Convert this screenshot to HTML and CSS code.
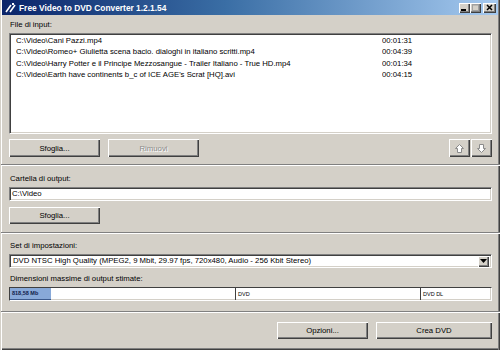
FILE: index.html
```html
<!DOCTYPE html>
<html>
<head>
<meta charset="utf-8">
<link rel="stylesheet" href="styles.css">
</head>
<body>
<div class="window">
  <div class="titlebar">
    <svg class="appicon" width="11" height="11" viewBox="0 0 11 11">
      <path d="M1 10 L6 3" stroke="#fff" stroke-width="1.6"/>
      <path d="M5 10 L10 3" stroke="#fff" stroke-width="1.6"/>
      <rect x="7" y="1" width="2" height="2" fill="#fff"/>
    </svg>
    <span class="title">Free Video to DVD Converter 1.2.1.54</span>
    <div class="tbtns">
      <span class="tbtn"><svg width="11" height="10" viewBox="0 0 11 10"><rect x="2" y="6" width="5" height="2" fill="#000"/></svg></span>
      <span class="tbtn"><svg width="11" height="10" viewBox="0 0 11 10"><rect x="2.5" y="1.5" width="6" height="6" fill="none" stroke="#a0a0a0"/><rect x="2" y="1" width="7" height="1.5" fill="#a0a0a0"/></svg></span>
      <span class="tbtn close"><svg width="11" height="10" viewBox="0 0 11 10"><path d="M3 2 L8 7 M8 2 L3 7" stroke="#000" stroke-width="1.5"/></svg></span>
    </div>
  </div>
  <div class="content">
    <div class="label l1">File di input:</div>
    <div class="list">
      <div class="row"><span>C:\Video\Cani Pazzi.mp4</span><span>00:01:31</span></div>
      <div class="row"><span>C:\Video\Romeo+ Giulietta scena bacio. dialoghi in italiano scritti.mp4</span><span>00:04:39</span></div>
      <div class="row"><span>C:\Video\Harry Potter e il Principe Mezzosangue - Trailer Italiano - True HD.mp4</span><span>00:01:34</span></div>
      <div class="row"><span>C:\Video\Earth have continents b_c of ICE AGE's Scrat [HQ].avi</span><span>00:04:15</span></div>
    </div>
    <div class="btnrow r1">
      <button class="btn">Sfoglia...</button>
      <button class="btn disabled">Rimuovi</button>
      <div class="spacer"></div>
      <button class="btn sq"><svg width="9" height="9" viewBox="0 0 9 9"><path d="M4.5 0.5 L8.5 4.5 L6.5 4.5 L6.5 8.5 L2.5 8.5 L2.5 4.5 L0.5 4.5 Z" fill="#fff" stroke="#8a8a8a"/></svg></button>
      <button class="btn sq"><svg width="9" height="9" viewBox="0 0 9 9"><path d="M4.5 8.5 L8.5 4.5 L6.5 4.5 L6.5 0.5 L2.5 0.5 L2.5 4.5 L0.5 4.5 Z" fill="#fff" stroke="#8a8a8a"/></svg></button>
    </div>
    <div class="sep s1"></div>
    <div class="label l2">Cartella di output:</div>
    <div class="field">C:\Video</div>
    <div class="btnrow r2">
      <button class="btn">Sfoglia...</button>
    </div>
    <div class="sep s2"></div>
    <div class="label l3">Set di impostazioni:</div>
    <div class="select">
      <span class="seltext">DVD NTSC High Quality (MPEG2, 9 Mbit, 29.97 fps, 720x480, Audio - 256 Kbit Stereo)</span>
      <span class="dd"><svg width="7" height="4" viewBox="0 0 7 4"><path d="M0 0 L7 0 L3.5 4 Z" fill="#000"/></svg></span>
    </div>
    <div class="label l4">Dimensioni massime di output stimate:</div>
    <div class="bar">
      <div class="fill"><span>818,58 Mb</span></div>
      <div class="mark m1">DVD</div>
      <div class="mark m2">DVD DL</div>
    </div>
    <div class="sep s3"></div>
    <div class="btnrow r3">
      <div class="spacer"></div>
      <button class="btn opt">Opzioni...</button>
      <button class="btn crea">Crea DVD</button>
    </div>
  </div>
</div>
</body>
</html>
```
FILE: styles.css
```css
* { box-sizing: border-box; }
html, body { margin: 0; padding: 0; background: #d4d0c8; }
body { font-family: "Liberation Sans", Arial, sans-serif; font-size: 7.75px; color: #000; }

.window {
  width: 500px;
  height: 350px;
  background: #d4d0c8;
  border-left: 1px solid #d4d0c8;
  box-shadow: inset 1px 0 #fff, inset -1px 0 #404040, inset -2px 0 #808080, inset 0 -1px #404040, inset 0 -2px #808080;
  display: flex;
  flex-direction: column;
  overflow: hidden;
}

.titlebar {
  height: 15px;
  margin: 0 2px 0 1px;
  background: linear-gradient(to right, #0a246a 0%, #3a6ea5 45%, #a6caf0 100%);
  display: flex;
  align-items: center;
  color: #fff;
}
.appicon { margin-left: 3px; margin-right: 3px; }
.title { font-weight: bold; font-size: 8.4px; }
.tbtns { margin-left: auto; display: flex; margin-right: 2px; }
.tbtn {
  width: 11px; height: 10px;
  background: #d4d0c8;
  box-shadow: inset 1px 1px #fff, inset -1px -1px #404040, inset -2px -2px #808080;
  display: flex;
}
.tbtn.close { margin-left: 2px; width: 13px; }
.tbtn.close svg { margin-left: 1px; }

.content {
  padding: 0 8px;
  display: flex;
  flex-direction: column;
}

.label { height: 10px; line-height: 10px; padding-left: 1px; }
.l1 { margin-top: 5px; }
.l2 { margin-top: 8px; }
.l3 { margin-top: 7px; }
.l4 { margin-top: 6px; }

.list {
  margin-top: 3px;
  height: 101px;
  background: #fff;
  border: 1px solid;
  border-color: #808080 #fff #fff #808080;
  box-shadow: inset 1px 1px #404040, inset -1px -1px #d4d0c8;
  padding: 1px 0 0 6px;
}
.row {
  display: grid;
  grid-template-columns: 366px 1fr;
  height: 11.33px;
  line-height: 11.33px;
  white-space: nowrap;
}
.row span { overflow: hidden; }

.btnrow { display: flex; align-items: stretch; }
.r1 { margin-top: 5px; height: 18px; }
.r2 { margin-top: 6px; height: 17px; }
.r3 { margin-top: 9px; height: 17px; }
.spacer { flex: 1; }

.btn {
  font: inherit;
  color: #000;
  background: #d4d0c8;
  border: 0;
  padding: 0;
  margin: 0;
  width: 91px;
  box-shadow: inset 1px 1px #fff, inset -1px -1px #404040, inset -2px -2px #808080;
  display: flex;
  align-items: center;
  justify-content: center;
}
.btn + .btn { margin-left: 8px; }
.btn.disabled { color: #8c8c8c; text-shadow: 1px 1px #fff; }
.btn.sq { width: 21px; margin-left: 1px; }
.btn.sq:first-of-type { margin-left: 0; }
.btn.opt { width: 91px; }
.btn.crea { width: 116px; }

.sep {
  height: 2px;
  margin: 0 -8px;
  border-top: 1px solid #808080;
  border-bottom: 1px solid #fff;
}
.s1 { margin-top: 7px; }
.s2 { margin-top: 8px; }
.s3 { margin-top: 10px; }

.field {
  margin-top: 3px;
  height: 14px;
  background: #fff;
  border: 1px solid;
  border-color: #808080 #fff #fff #808080;
  box-shadow: inset 1px 1px #404040, inset -1px -1px #d4d0c8;
  padding-left: 2px;
  line-height: 12px;
}

.select {
  margin-top: 3px;
  height: 14px;
  background: #fff;
  border: 1px solid;
  border-color: #808080 #fff #fff #808080;
  box-shadow: inset 1px 1px #404040, inset -1px -1px #d4d0c8;
  padding: 1px 2px 1px 3px;
  display: flex;
  align-items: center;
  line-height: 12px;
}
.seltext { flex: 1; white-space: nowrap; overflow: hidden; }
.dd {
  width: 11px; height: 11px;
  background: #d4d0c8;
  box-shadow: inset 1px 1px #fff, inset -1px -1px #404040, inset -2px -2px #808080;
  display: flex; align-items: center; justify-content: center;
}

.bar {
  margin-top: 3px;
  height: 14px;
  background: #fff;
  border: 1px solid;
  border-color: #404040 #fff #fff #404040;
  box-shadow: inset -1px -1px #d4d0c8;
  position: relative;
  display: flex;
}
.fill {
  width: 41px;
  height: 100%;
  background: #88a9d8;
  border-bottom: 1px solid #3c5a8c;
  font-size: 5.5px;
  font-weight: bold;
  color: #10204a;
  padding-left: 2px;
  line-height: 11px;
  white-space: nowrap;
}
.mark {
  position: absolute;
  top: 0; bottom: 0;
  border-left: 1px solid #404040;
  font-size: 5.5px;
  padding-left: 2px;
  line-height: 12px;
  color: #000;
}
.m1 { left: 225px; }
.m2 { left: 410px; }
```
